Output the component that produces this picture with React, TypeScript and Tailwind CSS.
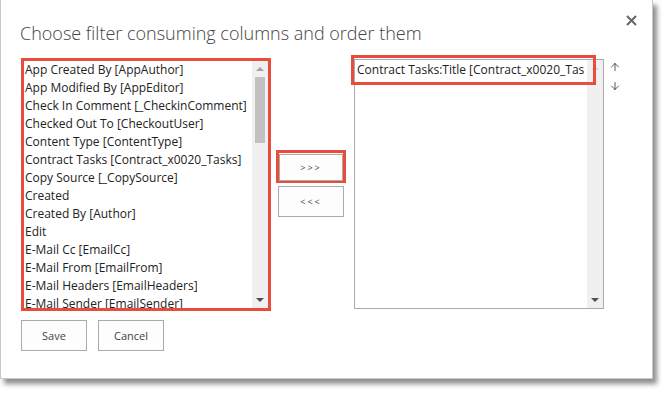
import { ArrowUp, ArrowDown } from "lucide-react";

const columns = [
  "App Created By [AppAuthor]",
  "App Modified By [AppEditor]",
  "Check In Comment [_CheckinComment]",
  "Checked Out To [CheckoutUser]",
  "Content Type [ContentType]",
  "Contract Tasks [Contract_x0020_Tasks]",
  "Copy Source [_CopySource]",
  "Created",
  "Created By [Author]",
  "Edit",
  "E-Mail Cc [EmailCc]",
  "E-Mail From [EmailFrom]",
  "E-Mail Headers [EmailHeaders]",
  "E-Mail Sender [EmailSender]",
];

function ScrollTrack({ thumb }: { thumb?: boolean }) {
  return (
    <div className="w-[16px] h-full bg-[#f0f0f0] flex flex-col items-center shrink-0">
      <div className="h-[16px] w-full flex items-center justify-center">
        <div
          className={`w-0 h-0 border-x-[4px] border-x-transparent border-b-[4px] ${
            thumb ? "border-b-[#a3a3a3]" : "border-b-[#d4d4d4]"
          }`}
        />
      </div>
      <div className="flex-1 w-full px-[3px]">
        {thumb && <div className="h-[66px] w-full bg-[#c1c1c1]" />}
      </div>
      <div className="h-[16px] w-full flex items-center justify-center">
        <div className="w-0 h-0 border-x-[4px] border-x-transparent border-t-[4px] border-t-[#505050]" />
      </div>
    </div>
  );
}

function CloseIcon() {
  return (
    <svg width="11" height="11" viewBox="0 0 11 11">
      <path d="M1 1 L10 10 M10 1 L1 10" stroke="#666" strokeWidth="2" />
    </svg>
  );
}

export default function App() {
  return (
    <div
      className="w-[668px] h-[394px] bg-white overflow-hidden"
      style={{ fontFamily: '"Open Sans", "Noto Sans", sans-serif' }}
    >
      <div className="w-[653px] h-[379px] border-x border-b border-[#c8c8c8] bg-white shadow-[4px_5px_5px_rgba(0,0,0,0.45)] flex flex-col">
        <div className="h-[55px] flex items-start justify-between pl-[19px] pr-[15px]">
          <h1 className="pt-[20px] text-[18px] leading-[26px] font-light text-[#444]">
            Choose filter consuming columns and order them
          </h1>
          <div className="pt-[15px]">
            <CloseIcon />
          </div>
        </div>

        <div className="flex items-start pl-[20px]">
          <div className="mt-[3px] border-[3px] border-[#e74c3c] w-[250px] h-[253px]">
            <div className="flex h-full">
              <div className="flex-1 overflow-hidden pl-[1px] text-[12px] leading-[18px] text-[#222] whitespace-nowrap">
                {columns.map((c) => (
                  <div key={c}>{c}</div>
                ))}
              </div>
              <ScrollTrack thumb />
            </div>
          </div>

          <div className="ml-[5px] mt-[95px] flex flex-col gap-[3px]">
            <div className="border-[3px] border-[#e74c3c] p-0 w-[70px] h-[33px]">
              <button className="w-full h-full border border-[#ababab] bg-[#fdfdfd] text-[9px] text-[#444] tracking-[2px]">
                &gt;&gt;&gt;
              </button>
            </div>
            <button className="ml-[2px] w-[66px] h-[31px] border border-[#ababab] bg-[#fdfdfd] text-[9px] text-[#444] tracking-[2px]">
              &lt;&lt;&lt;
            </button>
          </div>

          <div className="relative ml-[8px] mt-[4px] w-[250px] h-[250px] border border-[#ababab] flex">
            <div className="flex-1 overflow-hidden whitespace-nowrap pl-[2px] pt-[1px] text-[12px] leading-[18px] text-[#222]">
              Contract Tasks:Title [Contract_x0020_Tas
            </div>
            <ScrollTrack />
            <div className="absolute -left-[4px] -top-[5px] w-[245px] h-[30px] border-[3px] border-[#e74c3c]" />
          </div>

          <div className="ml-[5px] mt-[4px] flex flex-col text-[#222]">
            <ArrowUp size={12} strokeWidth={1.5} className="mt-[2px]" />
            <ArrowDown size={12} strokeWidth={1.5} className="mt-[7px]" />
          </div>
        </div>

        <div className="flex gap-[11px] pl-[20px] mt-[9px]">
          <button className="w-[66px] h-[31px] border border-[#ababab] bg-[#fdfdfd] text-[11px] leading-[14px] text-[#444]">
            Save
          </button>
          <button className="w-[66px] h-[31px] border border-[#ababab] bg-[#fdfdfd] text-[11px] leading-[14px] text-[#444]">
            Cancel
          </button>
        </div>
      </div>
    </div>
  );
}
